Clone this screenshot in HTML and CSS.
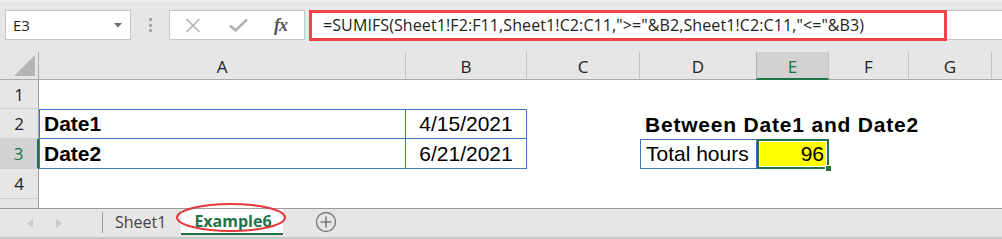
FILE: index.html
```html
<!DOCTYPE html>
<html>
<head>
<meta charset="utf-8">
<link rel="stylesheet" href="styles.css">
</head>
<body>
<div class="app">
  <div class="toolbar">
    <div class="namebox">
      <span class="nb-text">E3</span>
      <svg class="caret" width="8" height="5" viewBox="0 0 8 5"><path d="M0 0H8L4 4.5Z" fill="#6b6b6b"/></svg>
    </div>
    <div class="grip"><i></i><i></i><i></i></div>
    <div class="btns">
      <svg class="ico-x" width="16" height="15" viewBox="0 0 16 15"><path d="M1.5 1L14.5 14M14.5 1L1.5 14" stroke="#b3b3b3" stroke-width="1.6" fill="none"/></svg>
      <svg class="ico-ok" width="19" height="14" viewBox="0 0 19 14"><path d="M1 7.5L6.5 12.5L18 1.5" stroke="#b3b3b3" stroke-width="2.6" fill="none"/></svg>
      <span class="fx">fx</span>
    </div>
    <div class="formula">
      <span class="f-text">=SUMIFS(Sheet1!F2:F11,Sheet1!C2:C11,"&gt;="&amp;B2,Sheet1!C2:C11,"&lt;="&amp;B3)</span>
      <div class="annot"></div>
    </div>
  </div>

  <div class="sheet">
    <div class="ch corner"><svg width="21" height="21" viewBox="0 0 21 21"><path d="M21 0V21H0Z" fill="#b5b5b5"/></svg></div>
    <div class="ch">A</div>
    <div class="ch">B</div>
    <div class="ch">C</div>
    <div class="ch">D</div>
    <div class="ch sel">E</div>
    <div class="ch">F</div>
    <div class="ch">G</div>
    <div class="ch last"></div>

    <div class="rh">1</div>
    <div class="c"></div><div class="c"></div><div class="c"></div><div class="c"></div><div class="c"></div><div class="c"></div><div class="c"></div><div class="c"></div>

    <div class="rh">2</div>
    <div class="c bold bt bl br bb">Date1</div>
    <div class="c center bt br bb">4/15/2021</div>
    <div class="c"></div>
    <div class="c bold wide"><span>Between Date1 and Date2</span></div>
    <div class="c"></div><div class="c"></div>

    <div class="rh rsel">3</div>
    <div class="c bold bl br bb">Date2</div>
    <div class="c center br bb">6/21/2021</div>
    <div class="c"></div>
    <div class="c bt bl br bb label">Total hours</div>
    <div class="c active"><span class="val">96</span><i class="handle"></i></div>
    <div class="c"></div><div class="c"></div><div class="c"></div>

    <div class="rh">4</div>
    <div class="c"></div><div class="c"></div><div class="c"></div><div class="c"></div><div class="c"></div><div class="c"></div><div class="c"></div><div class="c"></div>

    <div class="rh part"></div>
    <div class="c"></div><div class="c"></div><div class="c"></div><div class="c"></div><div class="c"></div><div class="c"></div><div class="c"></div><div class="c"></div>
  </div>

  <div class="tabs">
    <div class="nav">
      <svg width="6" height="9" viewBox="0 0 6 9"><path d="M6 0V9L0 4.5Z" fill="#c9c9c9"/></svg>
      <svg width="6" height="9" viewBox="0 0 6 9"><path d="M0 0V9L6 4.5Z" fill="#c9c9c9"/></svg>
    </div>
    <div class="vsep"></div>
    <div class="tab">Sheet1</div>
    <div class="tab active-tab">Example6
      <svg class="ellipse" width="114" height="32" viewBox="0 0 114 32"><ellipse cx="57" cy="15.5" rx="54" ry="13.5" fill="none" stroke="#e5383b" stroke-width="2"/></svg>
    </div>
    <div class="add"><svg width="22" height="22" viewBox="0 0 22 22"><circle cx="11" cy="11" r="9.5" fill="none" stroke="#7a7a7a" stroke-width="1.4"/><path d="M11 5.5V16.5M5.5 11H16.5" stroke="#7a7a7a" stroke-width="1.6"/></svg></div>
  </div>
</div>
</body>
</html>
```

FILE: styles.css
```css
* { box-sizing: border-box; }
html, body { margin: 0; padding: 0; }
body {
  width: 1002px;
  height: 239px;
  overflow: hidden;
  background: #e6e6e6;
  font-family: "Open Sans", "Noto Sans", sans-serif;
}
.app { width: 1002px; height: 239px; display: flex; flex-direction: column; }

/* toolbar */
.toolbar {
  height: 52px;
  display: flex;
  align-items: flex-start;
  padding-top: 8px;
  padding-left: 5px;
  border-top: 2px solid #eeeeee;
}
.namebox {
  width: 126px;
  height: 30px;
  background: #fff;
  border: 1px solid #c6c6c6;
  display: flex;
  align-items: center;
  padding-left: 7px;
}
.nb-text { font-size: 15px; color: #222; }
.caret { margin-left: auto; margin-right: 8px; }
.grip {
  width: 38px;
  height: 30px;
  display: flex;
  flex-direction: column;
  align-items: center;
  justify-content: center;
  gap: 2.5px;
}
.grip i { width: 3px; height: 3px; background: #a8a8a8; display: block; }
.btns {
  width: 136px;
  height: 30px;
  background: #fff;
  border: 1px solid #c6c6c6;
  display: flex;
  align-items: center;
  padding-left: 15px;
}
.ico-x { margin-right: 28px; }
.ico-ok { margin-right: 26px; }
.fx {
  font-family: "Liberation Serif", "DejaVu Serif", serif;
  font-style: italic;
  font-weight: bold;
  font-size: 18px;
  color: #555;
  letter-spacing: -1px;
}
.formula {
  flex: 1;
  height: 30px;
  margin-left: 4px;
  background: #fff;
  border: 1px solid #c6c6c6;
  border-right: none;
  display: flex;
  align-items: center;
  padding-left: 13px;
  position: relative;
}
.f-text { font-size: 16px; letter-spacing: 0.1px; color: #222; white-space: nowrap; }
.annot {
  position: absolute;
  left: -1px;
  top: -1px;
  width: 638px;
  height: 31px;
  border: 3px solid #f0444a;
}

/* sheet */
.sheet {
  height: 156px;
  display: grid;
  grid-template-columns: 39px 367px 121px 113px 117px 72px 80px 83px 1fr;
  grid-template-rows: 28px 29px 30px 30px 30px 9px;
  background: #fff;
}
.ch {
  background: #e6e6e6;
  border-right: 1px solid #c4c4c4;
  border-bottom: 1px solid #a9a9a9;
  font-size: 17px;
  color: #222;
  display: flex;
  align-items: center;
  justify-content: center;
  padding-top: 2px;
}
.ch.corner { justify-content: flex-end; align-items: flex-end; padding: 0 3px 3px 0; border-right: 1px solid #a9a9a9; }
.ch.sel { background: #d2d2d2; color: #217346; border-bottom: 2px solid #217346; border-left: 1px solid #b0b0b0; margin-left: -1px; }
.ch.last { border-right: none; }
.rh {
  background: #e6e6e6;
  border-right: 1px solid #9f9f9f;
  border-bottom: 1px solid #cfcfcf;
  font-size: 17px;
  color: #222;
  display: flex;
  align-items: center;
  justify-content: center;
}
.rh.rsel { background: #d2d2d2; color: #217346; border-right: 2px solid #217346; }
.rh.part { border-bottom: none; }
.c {
  font-family: "Liberation Sans", Arial, sans-serif;
  font-size: 21px;
  color: #000;
  line-height: 24px;
  display: flex;
  align-items: flex-end;
  padding: 0 4px 2px 4px;
  white-space: nowrap;
  position: relative;
}
.c.bold { font-weight: bold; }
.c.wide { grid-column: span 3; padding-left: 5px; }
.c.wide span { letter-spacing: 0.8px; }
.c.center { justify-content: center; }
.bt { border-top: 1px solid #4472c4; }
.bl { border-left: 1px solid #4472c4; }
.br { border-right: 1px solid #4472c4; }
.bb { border-bottom: 1px solid #4472c4; }
.c.label { padding-left: 5px; }
.c.active {
  background: #ffff00;
  border: 2px solid #217346;
  box-shadow: inset 0 0 0 1px #fff;
  justify-content: flex-end;
  padding-right: 3px;
  padding-bottom: 1px;
}
.handle {
  position: absolute;
  right: -5px;
  bottom: -5px;
  width: 7px;
  height: 7px;
  background: #217346;
  border: 1px solid #fff;
  display: block;
}

/* tabs */
.tabs {
  flex: 1;
  display: flex;
  align-items: stretch;
  border-top: 1px solid #9b9b9b;
  border-bottom: 2px solid #c9c9c9;
  background: #e6e6e6;
  position: relative;
}
.nav {
  width: 102px;
  display: flex;
  align-items: center;
  padding-left: 27px;
  gap: 23px;
}
.vsep { width: 1px; background: #9a9a9a; margin: 3px 0 4px; }
.tab {
  font-size: 16px;
  color: #444;
  display: flex;
  align-items: center;
  padding: 0 14px 2px 12px;
}
.active-tab {
  background: #fff;
  color: #217346;
  font-weight: bold;
  border-bottom: 2px solid #217346;
  width: 102px;
  padding: 0 0 1px 13px;
  margin-left: 1px;
  position: relative;
  margin-bottom: 2px;
}
.ellipse { position: absolute; left: -7px; top: -7px; }
.add { display: flex; align-items: center; margin-left: 32px; padding-bottom: 2px; }
```
